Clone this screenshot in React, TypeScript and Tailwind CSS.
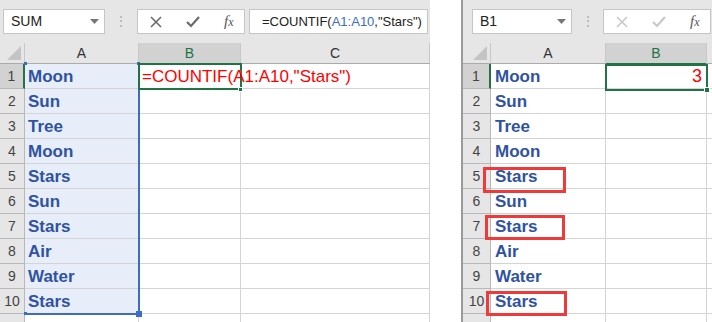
import React from "react";

const words = ["Moon", "Sun", "Tree", "Moon", "Stars", "Sun", "Stars", "Air", "Water", "Stars"];

const XIcon = ({ color }: { color: string }) => (
    <svg width="12" height="12" viewBox="0 0 12 12">
        <path d="M1 1 L11 11 M11 1 L1 11" stroke={color} strokeWidth="1.6" fill="none" />
    </svg>
);

const CheckIcon = ({ color }: { color: string }) => (
    <svg width="14" height="12" viewBox="0 0 14 12">
        <path d="M1 6 L5 10 L13 1" stroke={color} strokeWidth="2.2" fill="none" />
    </svg>
);

const Fx = () => (
    <span className="italic text-[15px] text-[#555] leading-none" style={{ fontFamily: '"Liberation Serif", serif' }}>
        f<span className="text-[12px]">x</span>
    </span>
);

const Arrow = () => (
    <svg width="9" height="5" viewBox="0 0 9 5">
        <path d="M0 0 L9 0 L4.5 5 Z" fill="#777" />
    </svg>
);

const Corner = () => (
    <svg width="14" height="14" viewBox="0 0 14 14" className="absolute right-[3px] bottom-[3px]">
        <path d="M14 0 L14 14 L0 14 Z" fill="#c4c4c4" />
    </svg>
);

const Toolbar = ({ name, nameMl, nameW, sepW, active, formula }: { name: string; nameMl: number; nameW: number; sepW: number; active: boolean; formula?: boolean }) => {
    const iconColor = active ? "#6a6a6a" : "#c8c8c8";
    return (
        <div className="flex h-[43px] shrink-0 bg-[#e6e6e6] pt-[9px]">
            <div
                className="flex h-[25px] shrink-0 items-center justify-between bg-white border border-[#c6c6c6] pl-[7px] pr-[5px] text-[14px] text-[#222]"
                style={{ marginLeft: nameMl, width: nameW }}
            >
                <span>{name}</span>
                <Arrow />
            </div>
            <div className="flex h-[25px] shrink-0 items-center justify-center text-[#b0b0b0] text-[14px]" style={{ width: sepW }}>⋮</div>
            <div className="flex h-[25px] w-[108px] shrink-0 items-center bg-white border border-[#c6c6c6] pl-[12px] gap-[24px]">
                <XIcon color={iconColor} />
                <CheckIcon color={iconColor} />
                <Fx />
            </div>
            {formula && (
                <div className="ml-[4px] flex h-[25px] w-[179px] shrink-0 items-center bg-white border border-[#c6c6c6] pl-[12px] text-[13px] text-[#222] whitespace-nowrap">
                    =COUNTIF(<span className="text-[#3a6bc9]">A1:A10</span>,"Stars")
                </div>
            )}
            {!formula && <div className="ml-[4px] h-[25px] flex-1 bg-white border border-[#c6c6c6]" />}
        </div>
    );
};

const HeaderRow = ({ cols }: { cols: { label: string; w: number; hi?: boolean }[] }) => (
    <div className="flex h-[21px] shrink-0 bg-[#e6e6e6] border-b border-[#ababab] text-[14px] text-[#333]">
        {cols.map((c, i) =>
            i === 0 ? (
                <div key={i} className="relative shrink-0 h-full border-r border-[#c8c8c8]" style={{ width: c.w }}>
                    <Corner />
                </div>
            ) : (
                <div
                    key={i}
                    className={`flex shrink-0 items-center justify-center border-r border-[#c8c8c8] ${c.hi ? "bg-[#d2d2d2] text-[#217346] border-b-2 border-b-[#217346] h-[22px]" : "h-full"}`}
                    style={{ width: c.w }}
                >
                    {c.label}
                </div>
            )
        )}
    </div>
);

const Panel = ({ left }: { left: boolean }) => {
    const widths = left ? [25, 114, 102, 189] : [28, 115, 101, 6];
    const rows = [...words, ""];
    return (
        <div className="relative flex shrink-0 flex-col">
            <HeaderRow
                cols={[
                    { label: "", w: widths[0] },
                    { label: "A", w: widths[1] },
                    { label: "B", w: widths[2], hi: true },
                    { label: left ? "C" : "", w: widths[3] },
                ]}
            />
            {rows.map((w, i) => (
                <div key={i} className="flex h-[25px] shrink-0">
                    <div
                        className={`flex shrink-0 items-center justify-center border-b border-r text-[14px] text-[#444] ${i === 0 ? "bg-[#d2d2d2] border-r-2 border-r-[#217346] border-b-[#b8b8b8]" : "bg-[#e6e6e6] border-[#b8b8b8]"}`}
                        style={{ width: widths[0] }}
                    >
                        {i < 10 ? i + 1 : ""}
                    </div>
                    <div
                        className={`flex shrink-0 items-center border-b border-r border-[#d4d4d4] ${left ? "bg-[#e8eef9] pl-[3px]" : "pl-[4px]"} ${left && i === 10 ? "bg-white" : ""}`}
                        style={{ width: widths[1] }}
                    >
                        <span className="pt-[2px] text-[17px] font-bold text-[#2f53a0]">{w}</span>
                    </div>
                    <div
                        className={`flex shrink-0 items-center justify-end border-b border-r border-[#d4d4d4] pr-[4px] ${!left && i === 0 ? "text-[18px] text-[#ff0000]" : ""}`}
                        style={{ width: widths[2] }}
                    >
                        {!left && i === 0 ? "3" : ""}
                    </div>
                    <div className="shrink-0 border-b border-r border-[#d4d4d4]" style={{ width: widths[3] }} />
                </div>
            ))}
            {left && (
                <>
                    <div className="absolute left-[25px] top-[20px] w-[115px] h-[252px] border-r-2 border-b-2 border-[#3c6cc4]" />
                    <div className="absolute left-[24px] top-[19px] w-[3px] h-[3px] bg-[#3c6cc4]" />
                    <div className="absolute left-[137px] top-[19px] w-[3px] h-[3px] bg-[#3c6cc4]" />
                    <div className="absolute left-[24px] top-[269px] w-[3px] h-[3px] bg-[#3c6cc4]" />
                    <div className="absolute left-[136px] top-[268px] w-[6px] h-[6px] bg-[#3c6cc4]" />
                    <div className="absolute left-[138px] top-[20px] w-[104px] h-[27px] border-2 border-[#217346]" />
                    <div className="absolute left-[238px] top-[44px] w-[5px] h-[5px] bg-[#217346] border border-white" />
                    <div className="absolute left-[142px] top-[20px] h-[27px] flex items-center text-[17px] text-[#ff0000] whitespace-nowrap">
                        =COUNTIF(A1:A10,"Stars")
                    </div>
                </>
            )}
            {!left && (
                <>
                    <div className="absolute left-[142px] top-[21px] w-[103px] h-[27px] border-2 border-[#217346]" />
                    <div className="absolute left-[241px] top-[44px] w-[6px] h-[6px] bg-[#217346] border border-white" />
                    <div className="absolute left-[20px] top-[124px] w-[83px] h-[26px] border-[3px] border-[#f03a3a]" />
                    <div className="absolute left-[22px] top-[172px] w-[80px] h-[25px] border-[3px] border-[#f03a3a]" />
                    <div className="absolute left-[23px] top-[248px] w-[81px] h-[25px] border-[3px] border-[#f03a3a]" />
                </>
            )}
        </div>
    );
};

export default function App() {
    return (
        <div className="flex w-[712px] h-[322px] overflow-hidden bg-white" style={{ fontFamily: '"Liberation Sans", Arial, sans-serif' }}>
            <div className="flex w-[430px] shrink-0 flex-col">
                <Toolbar name="SUM" nameMl={3} nameW={102} sepW={32} active formula />
                <Panel left />
            </div>
            <div className="w-[31px] shrink-0 bg-white" />
            <div className="flex w-[251px] shrink-0 flex-col border-l-2 border-[#9a9a9a]">
                <Toolbar name="B1" nameMl={9} nameW={100} sepW={31} active={false} />
                <Panel left={false} />
            </div>
        </div>
    );
}
